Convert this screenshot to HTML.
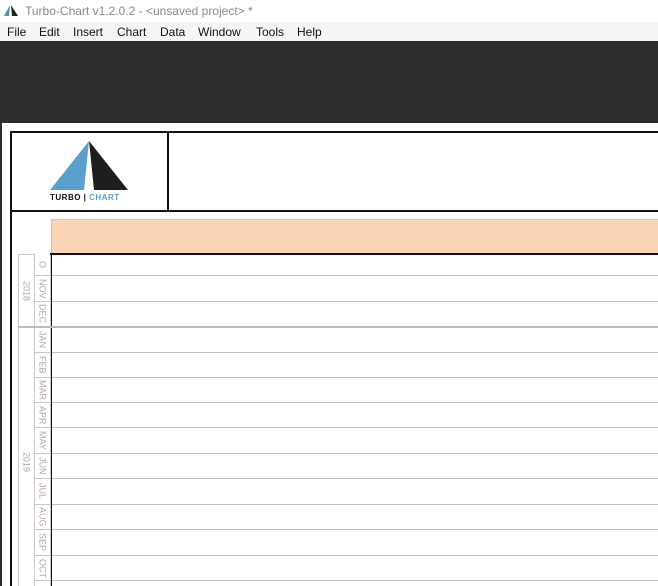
<!DOCTYPE html>
<html style="width:658px;height:586px;overflow:hidden"><head><style>
*{margin:0;padding:0;box-sizing:border-box}
body{width:658px;height:586px;overflow:hidden;background:#fff;font-family:"Liberation Sans",sans-serif;position:relative}
.a{position:absolute}
.v{position:absolute;writing-mode:vertical-rl;font-size:9px;color:#b9a3a3;display:flex;align-items:center;justify-content:center}
</style></head><body>
<svg class="a" style="left:4px;top:5px" width="16" height="12"><polygon points="6,0 0,11 5,11" fill="#4a8fc2"/><polygon points="7,0 14,11 8,11" fill="#222"/></svg>
<div class="a" style="left:25px;top:4px;font-size:12px;color:#888">Turbo-Chart v1.2.0.2 - &lt;unsaved project&gt; *</div>
<div class="a" style="left:0;top:22px;width:658px;height:19px;background:#f5f5f5;font-size:12px;color:#111">
<span class="a" style="left:7px;top:3px">File</span><span class="a" style="left:39px;top:3px">Edit</span><span class="a" style="left:73px;top:3px">Insert</span><span class="a" style="left:117px;top:3px">Chart</span><span class="a" style="left:160px;top:3px">Data</span><span class="a" style="left:198px;top:3px">Window</span><span class="a" style="left:256px;top:3px">Tools</span><span class="a" style="left:297px;top:3px">Help</span></div>
<div class="a" style="left:0;top:41px;width:658px;height:82px;background:#2d2d30"></div>
<div class="a" style="left:0;top:123px;width:2px;height:463px;background:#2d2d30"></div>
<div class="a" style="left:10px;top:131px;width:660px;height:2px;background:#111"></div>
<div class="a" style="left:10px;top:131px;width:2px;height:460px;background:#111"></div>
<div class="a" style="left:10px;top:131px;width:159px;height:81px;border:2px solid #111"></div>
<div class="a" style="left:167px;top:131px;width:500px;height:81px;border:2px solid #111"></div>
<svg class="a" style="left:48px;top:140px" width="84" height="52"><polygon points="41,1 2,50 36,50" fill="#5aa0cc"/><polygon points="41,1 46,50 80,50" fill="#1e1e1e"/></svg>
<div class="a" style="left:50px;top:193px;font-size:8px;font-weight:bold;letter-spacing:0.5px;color:#111">TURBO&nbsp;|&nbsp;<span style="color:#5aa0cc">CHART</span></div>
<div class="a" style="left:51px;top:219px;width:620px;height:35px;background:#f9d5b5;border:1px solid #c8c8c8"></div>
<div class="a" style="left:51px;top:253px;width:620px;height:2px;background:#111"></div>
<div class="a" style="left:50px;top:253px;width:2px;height:340px;background:#111"></div>
<div class="a" style="left:18px;top:254px;width:17px;height:74px;border:1px solid #c8c8c8"></div>
<div class="a" style="left:18px;top:327px;width:17px;height:270px;border:1px solid #c8c8c8"></div>
<div class="v" style="left:18px;top:254px;width:17px;height:74px">2018</div>
<div class="v" style="left:18px;top:327px;width:17px;height:270px">2019</div>
<div id="rows"></div>
<script>
var m=[["O",255,276],["NOV",276,302],["DEC",302,327],["JAN",327,353],["FEB",353,378],["MAR",378,403],["APR",403,428],["MAY",428,454],["JUN",454,479],["JUL",479,505],["AUG",505,530],["SEP",530,556],["OCT",556,581],["",581,600]];
var h="";m.forEach(function(r){h+='<div class="v" style="left:34px;top:'+r[1]+'px;width:17px;height:'+(r[2]-r[1])+'px;border:1px solid #c8c8c8;border-top:none">'+r[0]+'</div>';
if(r[1]>255)h+='<div class="a" style="left:52px;top:'+(r[1]-1)+'px;width:610px;height:1px;background:#c0c0c0"></div>';});
h+='<div class="a" style="left:18px;top:326px;width:640px;height:2px;background:#bbb"></div>';
document.getElementById("rows").innerHTML=h;
</script>
</body></html>
